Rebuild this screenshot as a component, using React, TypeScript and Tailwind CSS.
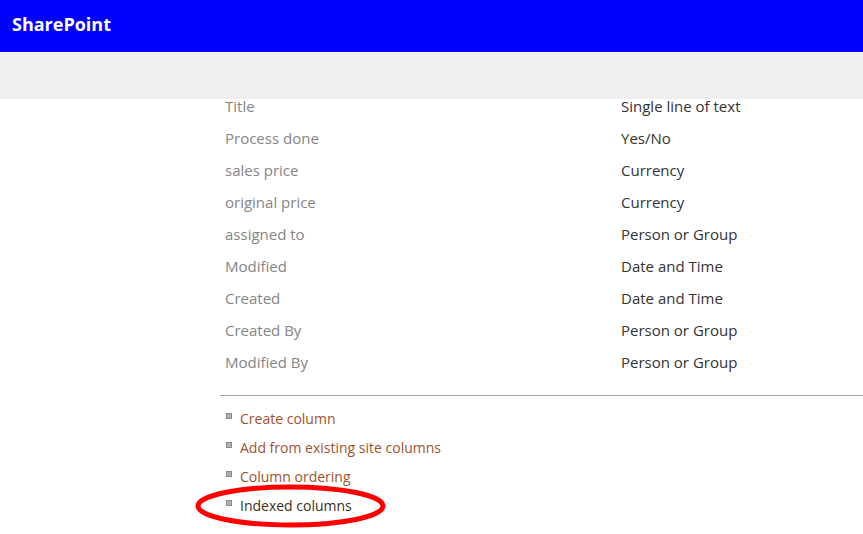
import React from 'react'

const columns = [
  { name: 'Title', type: 'Single line of text' },
  { name: 'Process done', type: 'Yes/No' },
  { name: 'sales price', type: 'Currency' },
  { name: 'original price', type: 'Currency' },
  { name: 'assigned to', type: 'Person or Group' },
  { name: 'Modified', type: 'Date and Time' },
  { name: 'Created', type: 'Date and Time' },
  { name: 'Created By', type: 'Person or Group' },
  { name: 'Modified By', type: 'Person or Group' },
]

const links = [
  { label: 'Create column', visited: false },
  { label: 'Add from existing site columns', visited: false },
  { label: 'Column ordering', visited: false },
  { label: 'Indexed columns', visited: true },
]

export default function App() {
  return (
    <div className="w-[863px] h-[534px] bg-white overflow-hidden font-['Open_Sans','Noto_Sans',sans-serif]">
      <header className="h-[52px] bg-[#0000ff] flex items-center px-3 pb-[3px]">
        <span className="text-white font-bold text-[18px]">SharePoint</span>
      </header>
      <div className="h-[46px] mt-[1px] bg-[#f0efee]" />

      <div className="ml-[220px] relative">
        <div className="flex flex-col gap-4 pl-[5px] -mt-[1px]">
          {columns.map(c => (
            <div key={c.name} className="flex text-[15px] leading-[16px]">
              <span className="w-[396px] text-[#858585]">{c.name}</span>
              <span className="text-[#333333]">{c.type}</span>
            </div>
          ))}
        </div>

        <div className="mt-[25px] border-t border-[#a6a6a6]" />

        <ul className="pt-[8px]">
          {links.map(l => (
            <li key={l.label} className="h-[29px] flex items-center text-[14px]">
              <span className="ml-[6px] mr-[8px] -mt-[6px] w-[6px] h-[6px] bg-[#b0b0b0] border border-[#8a8a8a]" />
              <a className={l.visited ? 'text-[#3b2f20]' : 'text-[#a0522d]'}>{l.label}</a>
            </li>
          ))}
        </ul>

        <svg
          className="absolute left-[-30px] top-[380px] pointer-events-none"
          width="200"
          height="56"
          viewBox="0 0 200 56"
        >
          <ellipse cx="100.5" cy="28" rx="92.5" ry="19" fill="none" stroke="#ff0000" strokeWidth="5" />
        </svg>
      </div>
    </div>
  )
}
